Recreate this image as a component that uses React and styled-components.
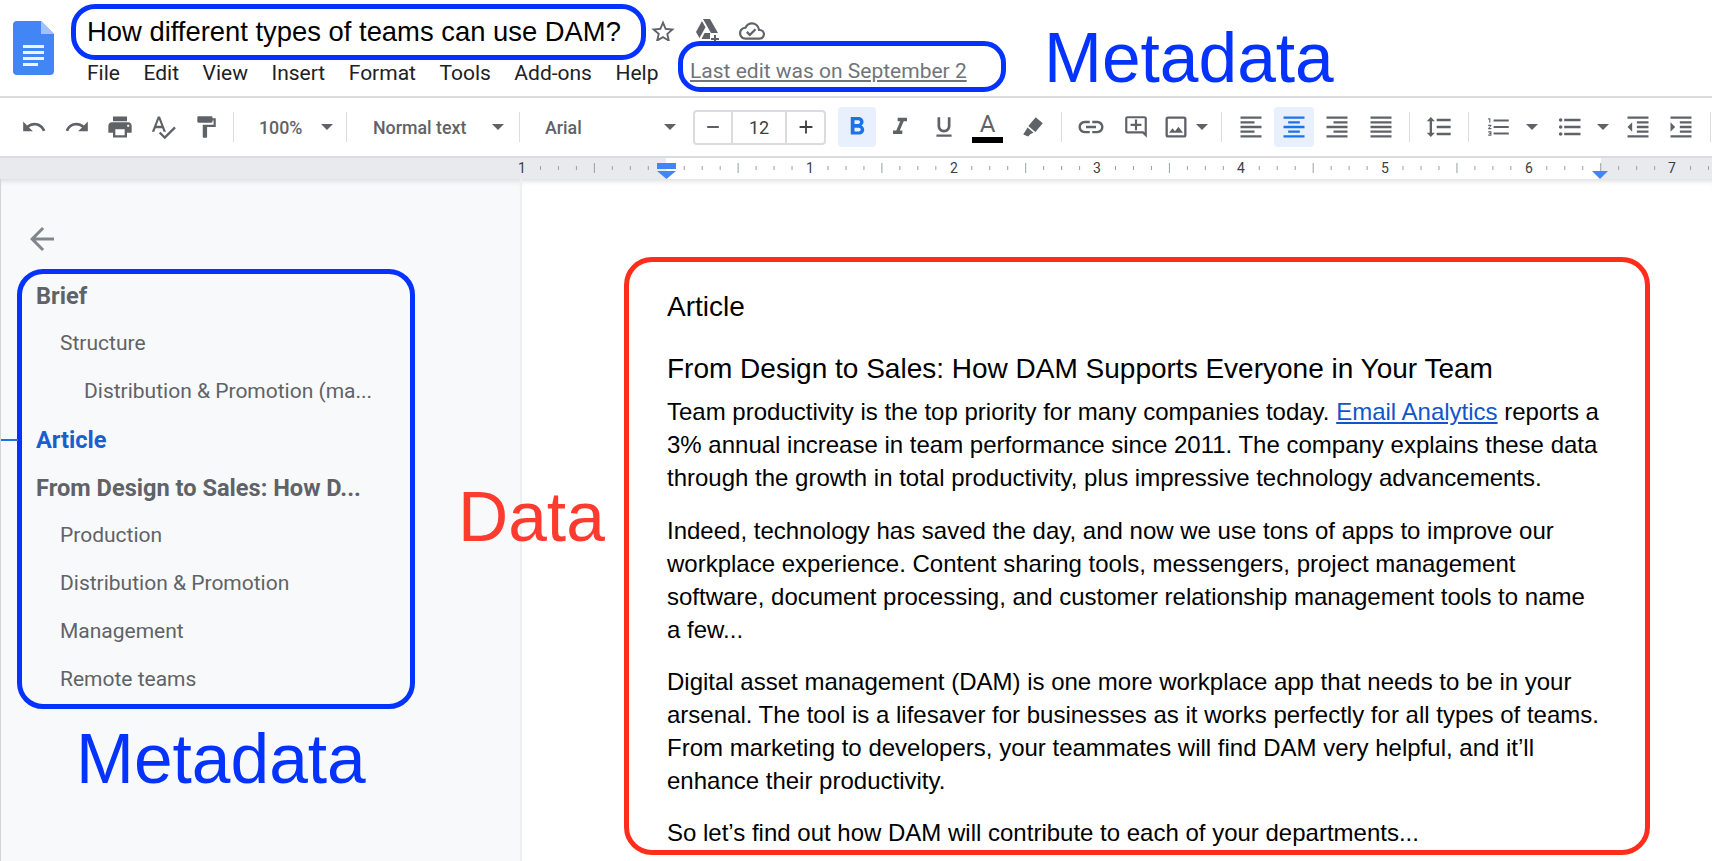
import React from "react";
import styled, { createGlobalStyle } from "styled-components";
import {
  MdUndo,
  MdRedo,
  MdPrint,
  MdSpellcheck,
  MdFormatPaint,
  MdFormatBold,
  MdFormatItalic,
  MdFormatUnderlined,
  MdLink,
  MdOutlineAddComment,
  MdOutlineImage,
  MdFormatAlignLeft,
  MdFormatAlignCenter,
  MdFormatAlignRight,
  MdFormatAlignJustify,
  MdFormatLineSpacing,
  MdFormatListNumbered,
  MdFormatListBulleted,
  MdFormatIndentDecrease,
  MdFormatIndentIncrease,
  MdStarBorder,
  MdArrowBack,
  MdOutlineCloudDone,
  MdAdd,
  MdRemove,
} from "react-icons/md";

const GlobalStyle = createGlobalStyle`
  html, body {
    margin: 0;
    padding: 0;
    background: #fff;
  }
  body {
    font-family: "Liberation Sans", Arial, sans-serif;
  }
`;

const Page = styled.div`
  width: 1712px;
  height: 861px;
  overflow: hidden;
  display: flex;
  flex-direction: column;
  background: #fff;
`;

/* top bar */
const Header = styled.header`
  height: 96px;
  flex-shrink: 0;
  display: flex;
  align-items: flex-start;
  border-bottom: 2px solid #dadce0;
  box-sizing: content-box;
`;

const LogoWrap = styled.div`
  width: 58px;
  padding: 21px 0 0 13px;
  flex-shrink: 0;
`;

const TitleColumn = styled.div`
  width: 578px;
  padding-top: 4px;
  flex-shrink: 0;
`;

const TitleBox = styled.div`
  box-sizing: border-box;
  width: 575px;
  height: 56px;
  border: 5px solid #0433ff;
  border-radius: 24px;
  padding-left: 11px;
  display: flex;
  align-items: center;
  font-size: 27.4px;
  color: #000;
  white-space: nowrap;
`;

const MenuBar = styled.nav`
  display: flex;
  height: 26px;
  padding-left: 16px;
  align-items: center;
  gap: 23.5px;
  font-family: Roboto, sans-serif;
  font-size: 21px;
  color: #202124;
  white-space: nowrap;
`;

const MetaColumn = styled.div`
  width: 396px;
  flex-shrink: 0;
`;

const DocIcons = styled.div`
  height: 23px;
  margin-top: 18px;
  overflow: hidden;
  display: flex;
  align-items: flex-start;
  gap: 18px;
  color: #5f6368;
`;

const LastEdit = styled.a`
  box-sizing: border-box;
  display: flex;
  align-items: center;
  margin-left: 29px;
  width: 328px;
  height: 51px;
  border: 5px solid #0433ff;
  border-radius: 22px;
  padding: 9px 0 0 7px;
  font-family: Roboto, sans-serif;
  font-size: 21px;
  color: #70757a;
  text-decoration: underline;
  white-space: nowrap;
`;

const Annotation = styled.div`
  font-size: 69.5px;
  line-height: 1;
  color: ${(p) => p.color};
  white-space: nowrap;
`;

const HeaderNote = styled(Annotation)`
  margin: 24px 0 0 -1px;
`;

/* toolbar */
const Toolbar = styled.div`
  height: 58px;
  flex-shrink: 0;
  display: flex;
  align-items: center;
  padding-left: 12px;
  border-bottom: 2px solid #dadce0;
  color: #5f6368;
`;

const ToolButton = styled.div`
  width: ${(p) => p.$w || 43}px;
  height: 40px;
  flex-shrink: 0;
  display: flex;
  align-items: center;
  justify-content: center;
  border-radius: 4px;
  background: ${(p) => (p.$active ? "#e8f0fe" : "transparent")};
  color: ${(p) => (p.$active ? "#1a73e8" : "#5f6368")};
  margin-left: ${(p) => p.$ml || 0}px;
`;

const Separator = styled.div`
  width: 1px;
  height: 30px;
  background: #dadce0;
  flex-shrink: 0;
  margin: 0 ${(p) => p.$r ?? p.$l ?? 0}px 0 ${(p) => p.$l || 0}px;
`;

const Dropdown = styled.div`
  width: ${(p) => p.$w}px;
  padding-left: ${(p) => p.$pl}px;
  padding-right: ${(p) => p.$pr}px;
  box-sizing: border-box;
  flex-shrink: 0;
  display: flex;
  align-items: center;
  justify-content: space-between;
  font-family: Roboto, sans-serif;
  font-weight: 500;
  font-size: 17.8px;
  color: #5f6368;
  white-space: nowrap;
`;

const Caret = styled.span`
  width: 0;
  height: 0;
  flex-shrink: 0;
  border-left: 6px solid transparent;
  border-right: 6px solid transparent;
  border-top: 6px solid #5f6368;
  margin-left: ${(p) => p.$ml || 0}px;
`;

const Stepper = styled.div`
  box-sizing: border-box;
  width: 133px;
  height: 35px;
  margin-left: 8px;
  flex-shrink: 0;
  display: grid;
  grid-template-columns: 36px 1fr 37px;
  border: 2px solid #dadce0;
  border-radius: 4px;
`;

const StepCell = styled.div`
  display: flex;
  align-items: center;
  justify-content: center;
  font-family: Roboto, sans-serif;
  font-size: 18px;
  color: #3c4043;
  border-left: ${(p) => (p.$divided ? "2px solid #dadce0" : "none")};
  border-right: ${(p) => (p.$divided ? "2px solid #dadce0" : "none")};
`;

const TextColor = styled.div`
  display: flex;
  flex-direction: column;
  align-items: center;
  font-family: Roboto, sans-serif;
  font-size: 24px;
  line-height: 26px;
  color: #5f6368;
`;

const ColorBar = styled.div`
  width: 31px;
  height: 6px;
  background: #000;
`;

/* ruler */
const RulerBar = styled.div`
  height: 21px;
  flex-shrink: 0;
  background: #e8eaed;
  line-height: 0;
`;

/* body */
const Main = styled.main`
  position: relative;
  flex: 1;
  display: flex;
  min-height: 0;
`;

const Sidebar = styled.aside`
  box-sizing: border-box;
  width: 522px;
  flex-shrink: 0;
  background: #f8f9fa;
  border-left: 1px solid #d4d4d4;
  border-right: 2px solid #eeeff1;
  box-shadow: inset 0 6px 6px -5px #d0d2d6;
  padding: 46px 0 0 16px;
  position: relative;
`;

const BackButton = styled.div`
  color: #80868b;
  height: 28px;
  padding-left: 7px;
  margin-bottom: 16px;
  display: flex;
  align-items: center;
`;

const Outline = styled.div`
  box-sizing: border-box;
  width: 398px;
  height: 440px;
  border: 5px solid #0433ff;
  border-radius: 26px;
`;

const OutlineItem = styled.div`
  box-sizing: border-box;
  height: 48px;
  padding: 0 0 ${(p) => (p.$bold ? 4 : 6)}px ${(p) => 14 + p.$level * 24}px;
  display: flex;
  align-items: center;
  font-family: Roboto, sans-serif;
  font-size: ${(p) => (p.$bold ? 23.6 : 21)}px;
  font-weight: ${(p) => (p.$bold ? 700 : 400)};
  color: ${(p) => (p.$current ? "#1a5fd0" : "#5f6368")};
  white-space: nowrap;
`;

const CurrentTick = styled.div`
  position: absolute;
  left: 0;
  top: 260px;
  width: 17px;
  height: 2px;
  background: #1a73e8;
`;

const SidebarNote = styled(Annotation)`
  margin: 16px 0 0 59px;
`;

const DataNote = styled(Annotation)`
  position: absolute;
  left: 458px;
  top: 304px;
`;

const DocArea = styled.section`
  flex: 1;
  padding: 78px 0 0 102px;
  box-shadow: inset 0 6px 6px -5px #d0d2d6;
`;

const ArticleBox = styled.div`
  box-sizing: border-box;
  width: 1026px;
  height: 598px;
  border: 5px solid #ff2d1a;
  border-radius: 28px;
  padding: 29px 0 0 38px;
  color: #000;
  overflow: hidden;
`;

const ArticleTitle = styled.h1`
  margin: 0;
  font-weight: 400;
  font-size: 28px;
  line-height: 32px;
`;

const ArticleHeading = styled.h2`
  margin: 30px 0 10px;
  font-weight: 400;
  font-size: 28px;
  line-height: 32px;
  white-space: nowrap;
`;

const Paragraph = styled.p`
  margin: 0 0 ${(p) => p.$gap || 19}px;
  font-size: 24px;
  line-height: 33px;
  white-space: nowrap;
`;

const ArticleLink = styled.a`
  color: #1155cc;
  text-decoration: underline;
`;

const DocsLogo = () => (
  <svg width="41" height="54" viewBox="0 0 41 54">
    <path d="M4 0h24l13 13v37a4 4 0 0 1-4 4H4a4 4 0 0 1-4-4V4a4 4 0 0 1 4-4z" fill="#4285f4" />
    <path d="M28 0l13 13H28z" fill="#a1c2fa" />
    <path d="M10 24h21v3H10zM10 30h21v3H10zM10 36h21v3H10zM10 42h15v3H10z" fill="#f1f1f1" />
  </svg>
);

const DriveIcon = () => (
  <svg width="26" height="28" viewBox="0 0 26 28">
    <path d="M8 1h7l8 14h-7zM7 3l3.500 6.200L4.500 20 1 14zM11.500 15H15v6H6.500l3-6z" fill="#5f6368" />
    <path d="M19 17h2v3h3v2h-3v3h-2v-3h-3v-2h3z" fill="#5f6368" />
  </svg>
);

const Highlighter = () => (
  <svg width="26" height="26" viewBox="0 0 24 24">
    <path d="M14.500 3l6.500 5.500-6.800 8-6.500-5.500zM7 12.500l5.500 4.700-2.700 1.300-2.300 2.300L3 19z" fill="#5f6368" />
  </svg>
);

const Ruler = () => {
  const ticks = [];
  // eighth of an inch is about 18px, inches start at x=522
  for (let i = 0; i < 67; i++) {
    const x = 522 + i * 17.97;
    if (i % 8 === 0) continue;
    const half = i % 4 === 0;
    ticks.push(
      <rect
        key={i}
        x={x}
        y={half ? 5 : 8}
        width="1"
        height={half ? 10 : 4}
        fill="#9aa0a6"
      />
    );
  }
  const numbers = [
    [522, "1"],
    [810, "1"],
    [954, "2"],
    [1097, "3"],
    [1241, "4"],
    [1385, "5"],
    [1529, "6"],
    [1672, "7"],
  ];
  return (
    <svg width="1712" height="21" viewBox="0 0 1712 21">
      <rect x="666" y="0" width="935" height="21" fill="#fff" />
      {ticks}
      {numbers.map(([x, n], i) => (
        <text
          key={i}
          x={x}
          y="15"
          textAnchor="middle"
          fontFamily="Roboto, sans-serif"
          fontSize="14"
          fill="#3c4043"
        >
          {n}
        </text>
      ))}
      <rect x="657" y="5" width="19" height="6" fill="#4285f4" />
      <path d="M657 13h19l-9.500 8z" fill="#4285f4" />
      <path d="M1592 13h16l-8 8z" fill="#4285f4" />
    </svg>
  );
};

const MENU = ["File", "Edit", "View", "Insert", "Format", "Tools", "Add-ons", "Help"];

const OUTLINE = [
  { text: "Brief", level: 0, bold: true },
  { text: "Structure", level: 1 },
  { text: "Distribution & Promotion (ma...", level: 2 },
  { text: "Article", level: 0, bold: true, current: true },
  { text: "From Design to Sales: How D...", level: 0, bold: true },
  { text: "Production", level: 1 },
  { text: "Distribution & Promotion", level: 1 },
  { text: "Management", level: 1 },
  { text: "Remote teams", level: 1 },
];

function App() {
  return (
    <Page>
      <GlobalStyle />
      <Header>
        <LogoWrap>
          <DocsLogo />
        </LogoWrap>
        <TitleColumn>
          <TitleBox>How different types of teams can use DAM?</TitleBox>
          <MenuBar>
            {MENU.map((m) => (
              <span key={m}>{m}</span>
            ))}
          </MenuBar>
        </TitleColumn>
        <MetaColumn>
          <DocIcons>
            <MdStarBorder size={28} />
            <DriveIcon />
            <MdOutlineCloudDone size={26} />
          </DocIcons>
          <LastEdit>Last edit was on September 2</LastEdit>
        </MetaColumn>
        <HeaderNote color="#0433ff">Metadata</HeaderNote>
      </Header>

      <Toolbar>
        <ToolButton><MdUndo size={26} /></ToolButton>
        <ToolButton><MdRedo size={26} /></ToolButton>
        <ToolButton><MdPrint size={28} /></ToolButton>
        <ToolButton><MdSpellcheck size={28} /></ToolButton>
        <ToolButton $w={44}><MdFormatPaint size={26} /></ToolButton>
        <Separator $l={5} />
        <Dropdown $w={107} $pl={20} $pr={13}>100%<Caret /></Dropdown>
        <Separator />
        <Dropdown $w={172} $pl={26} $pr={15}>Normal text<Caret /></Dropdown>
        <Separator />
        <Dropdown $w={165} $pl={25} $pr={9}>Arial<Caret /></Dropdown>
        <Stepper>
          <StepCell><MdRemove size={20} /></StepCell>
          <StepCell $divided>12</StepCell>
          <StepCell><MdAdd size={22} /></StepCell>
        </Stepper>
        <ToolButton $w={38} $ml={12} $active><MdFormatBold size={30} /></ToolButton>
        <ToolButton $ml={2}><MdFormatItalic size={28} /></ToolButton>
        <ToolButton $w={45}><MdFormatUnderlined size={26} /></ToolButton>
        <ToolButton>
          <TextColor>A<ColorBar /></TextColor>
        </ToolButton>
        <ToolButton $w={47}><Highlighter /></ToolButton>
        <Separator $l={5} />
        <ToolButton $w={48}><MdLink size={30} /></ToolButton>
        <ToolButton $w={41}><MdOutlineAddComment size={26} /></ToolButton>
        <ToolButton $w={39}><MdOutlineImage size={28} /></ToolButton>
        <Caret $ml={1} />
        <Separator $l={13} $r={7} />
        <ToolButton><MdFormatAlignLeft size={28} /></ToolButton>
        <ToolButton $w={40} $ml={2} $active><MdFormatAlignCenter size={28} /></ToolButton>
        <ToolButton $w={45}><MdFormatAlignRight size={28} /></ToolButton>
        <ToolButton><MdFormatAlignJustify size={28} /></ToolButton>
        <Separator $l={7} />
        <ToolButton $w={44}><MdFormatLineSpacing size={28} /></ToolButton>
        <Separator $l={7} />
        <ToolButton $w={46}><MdFormatListNumbered size={26} /></ToolButton>
        <Caret $ml={4} />
        <ToolButton $w={44} $ml={10}><MdFormatListBulleted size={28} /></ToolButton>
        <Caret $ml={5} />
        <ToolButton $ml={7}><MdFormatIndentDecrease size={28} /></ToolButton>
        <ToolButton $w={44}><MdFormatIndentIncrease size={28} /></ToolButton>
        <Separator $l={7} />
      </Toolbar>

      <RulerBar>
        <Ruler />
      </RulerBar>

      <Main>
        <Sidebar>
          <CurrentTick />
          <BackButton><MdArrowBack size={36} /></BackButton>
          <Outline>
            {OUTLINE.map((item) => (
              <OutlineItem
                key={item.text}
                $level={item.level}
                $bold={item.bold}
                $current={item.current}
              >
                {item.text}
              </OutlineItem>
            ))}
          </Outline>
          <SidebarNote color="#0433ff">Metadata</SidebarNote>
        </Sidebar>
        <DocArea>
          <ArticleBox>
            <ArticleTitle>Article</ArticleTitle>
            <ArticleHeading>From Design to Sales: How DAM Supports Everyone in Your Team</ArticleHeading>
            <Paragraph $gap={20}>
              Team productivity is the top priority for many companies today. <ArticleLink>Email Analytics</ArticleLink> reports a<br />
              3% annual increase in team performance since 2011. The company explains these data<br />
              through the growth in total productivity, plus impressive technology advancements.
            </Paragraph>
            <Paragraph>
              Indeed, technology has saved the day, and now we use tons of apps to improve our<br />
              workplace experience. Content sharing tools, messengers, project management<br />
              software, document processing, and customer relationship management tools to name<br />
              a few...
            </Paragraph>
            <Paragraph>
              Digital asset management (DAM) is one more workplace app that needs to be in your<br />
              arsenal. The tool is a lifesaver for businesses as it works perfectly for all types of teams.<br />
              From marketing to developers, your teammates will find DAM very helpful, and it’ll<br />
              enhance their productivity.
            </Paragraph>
            <Paragraph>So let’s find out how DAM will contribute to each of your departments...</Paragraph>
          </ArticleBox>
        </DocArea>
        <DataNote color="#ff3b30">Data</DataNote>
      </Main>
    </Page>
  );
}

export default App;
